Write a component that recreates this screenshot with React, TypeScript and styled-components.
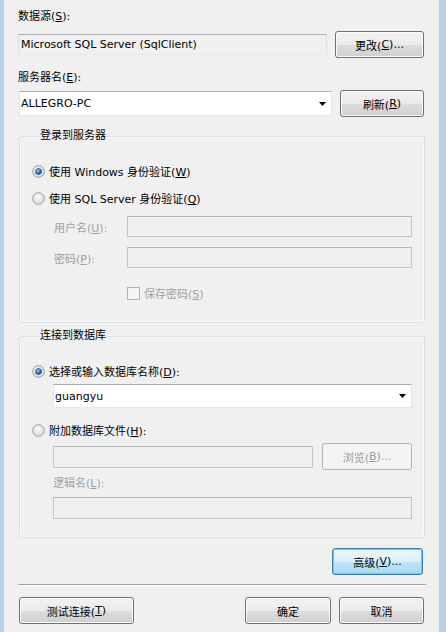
import React from "react";
import styled, { createGlobalStyle, css } from "styled-components";

const Global = createGlobalStyle`
  html, body { margin: 0; padding: 0; background: #f0f0f0; }
  body {
    font-family: "DejaVu Sans", "Noto Sans CJK SC", sans-serif;
    font-size: 11px;
    color: #000;
  }
  * { box-sizing: border-box; }
`;

const Frame = styled.div`
  width: 446px;
  height: 632px;
  border-left: 4px solid #bad1ea;
  border-right: 7px solid #bad1ea;
  background: #f0f0f0;
  padding: 9px 15px 0 14px;
  display: flex;
  flex-direction: column;
  overflow: hidden;
`;

const Label = styled.div<{ $disabled?: boolean; $indent?: number; $mt?: number }>`
  line-height: 16px;
  height: 16px;
  white-space: nowrap;
  color: ${(p) => (p.$disabled ? "#a0a0a0" : "#000")};
  padding-left: ${(p) => p.$indent ?? 0}px;
  margin-top: ${(p) => p.$mt ?? 0}px;
  flex-shrink: 0;
`;

const Key = styled.span`
  text-decoration: underline;
  text-underline-offset: 1px;
`;

const Row = styled.div<{ $mt: number; $indent?: number; $gap?: number }>`
  display: flex;
  align-items: center;
  justify-content: space-between;
  gap: ${(p) => p.$gap ?? 0}px;
  height: 27px;
  flex-shrink: 0;
  margin-top: ${(p) => p.$mt}px;
  padding-left: ${(p) => p.$indent ?? 0}px;
`;

const TextBox = styled.div<{
  $w?: number;
  $grow?: boolean;
  $h: number;
  $disabled?: boolean;
  $readonly?: boolean;
  $ml?: number;
  $mt?: number;
}>`
  ${(p) => (p.$w ? css`width: ${p.$w}px;` : "")}
  ${(p) => (p.$grow ? css`flex: 1 1 auto;` : css`flex-shrink: 0;`)}
  height: ${(p) => p.$h}px;
  margin-left: ${(p) => p.$ml ?? 0}px;
  margin-top: ${(p) => p.$mt ?? 0}px;
  border: 1px solid #dbdfe6;
  border-top-color: #abadb3;
  border-bottom-color: #e3e9ef;
  background: ${(p) => (p.$disabled || p.$readonly ? "#f0f0f0" : "#fff")};
  ${(p) =>
    p.$disabled &&
    css`
      border-color: #c2c5c9;
      border-top-color: #b5b8bc;
    `}
  display: flex;
  align-items: center;
  padding-left: 2px;
  white-space: nowrap;
`;

const Combo = styled.div<{ $w?: number; $h: number; $ml?: number; $mt?: number }>`
  ${(p) => (p.$w ? css`width: ${p.$w}px;` : "")}
  height: ${(p) => p.$h}px;
  margin-left: ${(p) => p.$ml ?? 0}px;
  margin-top: ${(p) => p.$mt ?? 0}px;
  border: 1px solid #e2e3ea;
  border-top-color: #abadb3;
  border-bottom-color: #e3e9ef;
  background: #fff;
  display: flex;
  align-items: center;
  justify-content: space-between;
  padding: 0 5px 0 1px;
  white-space: nowrap;
  flex-shrink: 0;
`;

const Button = styled.div<{ $w: number; $variant?: "default" | "focus" | "disabled"; $ml?: number }>`
  width: ${(p) => p.$w}px;
  height: 27px;
  margin-left: ${(p) => p.$ml ?? 0}px;
  flex-shrink: 0;
  display: flex;
  align-items: center;
  justify-content: center;
  border-radius: 3px;
  white-space: nowrap;
  border: 1px solid #707070;
  box-shadow: inset 0 0 0 1px #fbfbfb;
  background: linear-gradient(#f2f2f2 0%, #ebebeb 50%, #dddddd 51%, #cfcfcf 100%);
  color: #000;
  ${(p) =>
    p.$variant === "focus" &&
    css`
      border-color: #3c7fb1;
      box-shadow: inset 0 0 0 1px #48d8fb;
      background: linear-gradient(#eaf6fd 0%, #d9f0fc 50%, #bee6fd 51%, #a7d9f5 100%);
    `}
  ${(p) =>
    p.$variant === "disabled" &&
    css`
      border-color: #adb2b5;
      box-shadow: none;
      background: #f4f4f4;
      color: #9c9c9c;
    `}
`;

const Group = styled.div<{ $mt: number; $pb: number }>`
  width: 406px;
  margin-left: 1px;
  margin-top: ${(p) => p.$mt}px;
  border: 1px solid #d5dfe5;
  border-radius: 3px;
  box-shadow: inset 0 0 0 1px #f8f8f8;
  padding: 0 12px ${(p) => p.$pb}px 12px;
  display: flex;
  flex-direction: column;
  flex-shrink: 0;
`;

const GroupTitle = styled.div`
  align-self: flex-start;
  margin: -9px 0 0 7px;
  padding: 0 1px;
  line-height: 16px;
  height: 16px;
  background: #f0f0f0;
`;

const OptionRow = styled.div<{ $mt: number; $indent?: number; $disabled?: boolean }>`
  display: flex;
  align-items: center;
  gap: 4px;
  height: 16px;
  flex-shrink: 0;
  margin-top: ${(p) => p.$mt}px;
  padding-left: ${(p) => p.$indent ?? 0}px;
  white-space: nowrap;
  color: ${(p) => (p.$disabled ? "#a0a0a0" : "#000")};
`;

const FieldRow = styled.div<{ $mt: number }>`
  display: flex;
  align-items: center;
  height: 21px;
  flex-shrink: 0;
  margin-top: ${(p) => p.$mt}px;
  padding-left: 22px;
`;

const FieldLabel = styled.div`
  width: 73px;
  flex-shrink: 0;
  color: #a0a0a0;
  white-space: nowrap;
`;

const RightAligned = styled.div`
  display: flex;
  justify-content: flex-end;
  margin-top: 10px;
  margin-right: 1px;
`;

const Separator = styled.div`
  height: 2px;
  margin-top: 9px;
  margin-right: -2px;
  border-top: 1px solid #a0a0a0;
  border-bottom: 1px solid #ffffff;
  flex-shrink: 0;
`;

const Footer = styled.div`
  display: flex;
  align-items: center;
  gap: 8px;
  margin-top: 11px;
  padding-left: 1px;
`;

const Spacer = styled.div`
  flex: 1;
`;

const Radio = ({ checked }: { checked?: boolean }) => (
  <svg width="13" height="13" viewBox="0 0 13 13" style={{ flexShrink: 0 }}>
    <defs>
      <radialGradient id="rbg" cx="0.4" cy="0.35" r="0.7">
        <stop offset="0" stopColor="#ffffff" />
        <stop offset="1" stopColor="#d2d2d2" />
      </radialGradient>
      <radialGradient id="rdot" cx="0.4" cy="0.35" r="0.7">
        <stop offset="0" stopColor="#9fe6ff" />
        <stop offset="0.5" stopColor="#2c7fd0" />
        <stop offset="1" stopColor="#0c3d7a" />
      </radialGradient>
    </defs>
    <circle cx="6.5" cy="6.5" r="5.8" fill="url(#rbg)" stroke="#9a9a9a" strokeWidth="1" />
    <circle cx="6.5" cy="6.5" r="4.4" fill="none" stroke="#e6e6e6" strokeWidth="1" />
    {checked && <circle cx="6.5" cy="6.5" r="3" fill="url(#rdot)" stroke="#1e4f7e" strokeWidth="0.7" />}
  </svg>
);

const CheckBox = styled.div`
  width: 13px;
  height: 13px;
  border: 1px solid #b1b1b1;
  background: #f4f4f4;
  flex-shrink: 0;
`;

const Arrow = () => (
  <svg width="7" height="4" viewBox="0 0 7 4">
    <polygon points="0,0 7,0 3.5,4" fill="#000" />
  </svg>
);

export default function App() {
  return (
    <>
      <Global />
      <Frame>
        <Label>
          数据源(<Key>S</Key>):
        </Label>
        <Row $mt={6}>
          <TextBox $w={309} $h={21} $readonly>
            Microsoft SQL Server (SqlClient)
          </TextBox>
          <Button $w={89}>
            更改(<Key>C</Key>)...
          </Button>
        </Row>
        <Label $mt={12}>
          服务器名(<Key>E</Key>):
        </Label>
        <Row $mt={4}>
          <Combo $w={313} $h={25} $ml={1}>
            <span>ALLEGRO-PC</span>
            <Arrow />
          </Combo>
          <Button $w={84}>
            刷新(<Key>R</Key>)
          </Button>
        </Row>

        <Group $mt={19} $pb={21}>
          <GroupTitle>登录到服务器</GroupTitle>
          <OptionRow $mt={19}>
            <Radio checked />
            <span>
              使用 Windows 身份验证(<Key>W</Key>)
            </span>
          </OptionRow>
          <OptionRow $mt={11}>
            <Radio />
            <span>
              使用 SQL Server 身份验证(<Key>Q</Key>)
            </span>
          </OptionRow>
          <FieldRow $mt={10}>
            <FieldLabel>
              用户名(<Key>U</Key>):
            </FieldLabel>
            <TextBox $grow $h={21} $disabled />
          </FieldRow>
          <FieldRow $mt={10}>
            <FieldLabel>
              密码(<Key>P</Key>):
            </FieldLabel>
            <TextBox $grow $h={21} $disabled />
          </FieldRow>
          <OptionRow $mt={17} $indent={95} $disabled>
            <CheckBox />
            <span>
              保存密码(<Key>S</Key>)
            </span>
          </OptionRow>
        </Group>

        <Group $mt={13} $pb={18}>
          <GroupTitle>连接到数据库</GroupTitle>
          <OptionRow $mt={19}>
            <Radio checked />
            <span>
              选择或输入数据库名称(<Key>D</Key>):
            </span>
          </OptionRow>
          <Combo $h={24} $ml={21} $mt={5}>
            <span>guangyu</span>
            <Arrow />
          </Combo>
          <OptionRow $mt={14}>
            <Radio />
            <span>
              附加数据库文件(<Key>H</Key>):
            </span>
          </OptionRow>
          <Row $mt={5} $indent={21} $gap={8}>
            <TextBox $w={260} $h={22} $disabled />
            <Button $w={90} $variant="disabled">
              浏览(<Key>B</Key>)...
            </Button>
          </Row>
          <Label $disabled $indent={21} $mt={6}>
            逻辑名(<Key>L</Key>):
          </Label>
          <TextBox $h={22} $ml={21} $mt={5} $disabled />
        </Group>

        <RightAligned>
          <Button $w={91} $variant="focus">
            高级(<Key>V</Key>)...
          </Button>
        </RightAligned>
        <Separator />
        <Footer>
          <Button $w={115}>
            测试连接(<Key>T</Key>)
          </Button>
          <Spacer />
          <Button $w={86}>确定</Button>
          <Button $w={85}>取消</Button>
        </Footer>
      </Frame>
    </>
  );
}
